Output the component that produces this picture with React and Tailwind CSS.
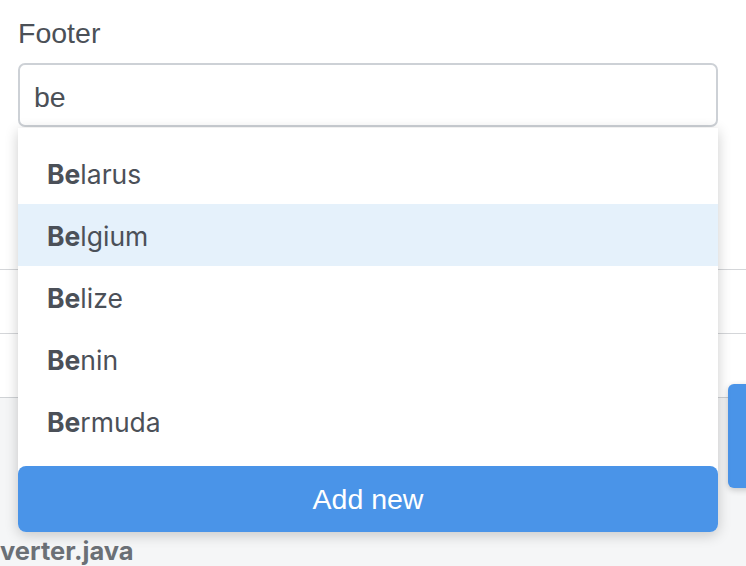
export default function App() {
  const items = [
    ["Be", "larus"],
    ["Be", "lgium"],
    ["Be", "lize"],
    ["Be", "nin"],
    ["Be", "rmuda"],
  ];
  return (
    <div className="relative w-[746px] h-[566px] overflow-hidden bg-[#f5f6f7]" style={{ fontFamily: '"Liberation Sans", Arial, sans-serif' }}>
      {/* underlying page */}
      <div className="h-[398px] bg-white border-b border-[#cfd2d5] flex flex-col">
        <div className="h-[269px]" />
        <div className="h-[64px] border-t border-[#d4d6d9]" />
        <div className="flex-1 border-t border-[#d4d6d9]" />
      </div>
      <div className="absolute left-[728px] top-[384px] w-[60px] h-[104px] rounded-[6px] bg-[#4a94e8] shadow-[0_2px_6px_rgba(0,0,0,0.2)]" />
      <div className="absolute left-0 top-[535px] text-[25.5px] font-bold text-[#6b7076] leading-[32px] whitespace-nowrap" style={{ fontFamily: 'Inter, sans-serif' }}>
        verter.java
      </div>

      {/* overlay field */}
      <div className="absolute left-[18px] top-0 w-[700px]">
        <div className="pt-[15px] h-[63px] text-[28.5px] leading-[36px] text-[#4b5057]">Footer</div>
        <div className="h-[64px] rounded-[7px] border-2 border-[#cdd1d6] bg-white flex items-center pl-[14px] text-[28.5px] text-[#4b5057]">
          <span className="mt-[4px]">be</span>
        </div>
        <div className="mt-px bg-white pt-[14px] shadow-[0_3px_14px_rgba(0,0,0,0.2)] rounded-b-[8px]" style={{ fontFamily: 'Inter, sans-serif' }}>
          {items.map(([b, r], i) => (
            <div
              key={i}
              className={`h-[62px] flex items-center pl-[29px] text-[26.5px] text-[#4b5058] ${i === 1 ? "bg-[#e5f1fb]" : ""}`}
            >
              <span className="mt-[3px]">
                <span className="font-bold">{b}</span>
                <span>{r}</span>
              </span>
            </div>
          ))}
          <div className="mt-[14px] h-[66px] rounded-[8px] bg-[#4a94e8] flex items-center justify-center text-white text-[28.5px]" style={{ fontFamily: '"Liberation Sans", Arial, sans-serif' }}>
            Add new
          </div>
        </div>
      </div>
    </div>
  );
}
